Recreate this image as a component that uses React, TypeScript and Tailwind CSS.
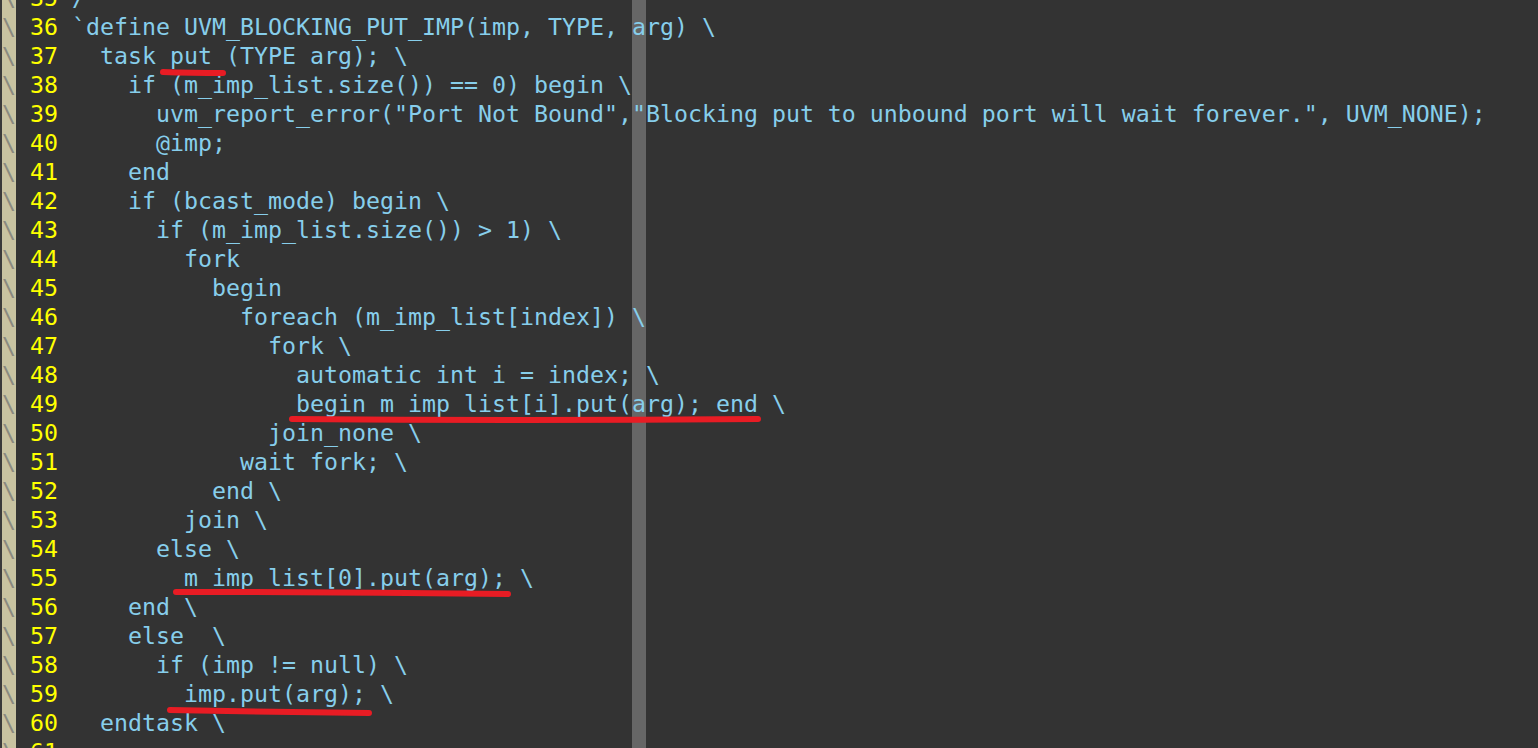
import React from 'react';

const lines: [number, string][] = [
    [35, '/'],
    [36, '`define UVM_BLOCKING_PUT_IMP(imp, TYPE, arg) \\'],
    [37, '  task put (TYPE arg); \\'],
    [38, '    if (m_imp_list.size()) == 0) begin \\'],
    [39, '      uvm_report_error("Port Not Bound","Blocking put to unbound port will wait forever.", UVM_NONE);'],
    [40, '      @imp;'],
    [41, '    end'],
    [42, '    if (bcast_mode) begin \\'],
    [43, '      if (m_imp_list.size()) > 1) \\'],
    [44, '        fork'],
    [45, '          begin'],
    [46, '            foreach (m_imp_list[index]) \\'],
    [47, '              fork \\'],
    [48, '                automatic int i = index; \\'],
    [49, '                begin m_imp_list[i].put(arg); end \\'],
    [50, '              join_none \\'],
    [51, '            wait fork; \\'],
    [52, '          end \\'],
    [53, '        join \\'],
    [54, '      else \\'],
    [55, '        m_imp_list[0].put(arg); \\'],
    [56, '    end \\'],
    [57, '    else  \\'],
    [58, '      if (imp != null) \\'],
    [59, '        imp.put(arg); \\'],
    [60, '  endtask \\'],
    [61, ''],
];

// hand-drawn red marks over the code
const Annotations = () => (
    <svg
        className="absolute inset-0 pointer-events-none z-20"
        width="1538"
        height="748"
        viewBox="0 0 1538 748"
    >
        <g stroke="#e81c24" strokeWidth="6" strokeLinecap="round" fill="none">
            <path d="M163 72 Q190 73 223 73" />
            <path d="M292 419 Q520 421 758 419" />
            <path d="M176 592 Q340 592 508 594" />
            <path d="M170 710 Q270 712 369 713" />
        </g>
    </svg>
);

export default function App() {
    return (
        <div
            className="relative w-[1538px] h-[748px] overflow-hidden bg-[#333333]"
            style={{ fontFamily: '"DejaVu Sans Mono", monospace' }}
        >
            {/* colorcolumn */}
            <div className="absolute top-0 bottom-0 left-[632px] w-[14px] bg-[#666666]" />

            <div className="relative z-10 -mt-[17.5px] text-[23.25px] leading-[29px]">
                {lines.map(([n, code]) => (
                    <div key={n} className="flex h-[29px]">
                        <div className="w-[2px] bg-[#3a3a3a]" />
                        <div className="w-[14px] bg-[#c8c3a1] text-[#8a8a80] whitespace-pre">\</div>
                        <div className="w-[56px] text-[#ffff00] whitespace-pre">
                            {String(n).padStart(3, ' ') + ' '}
                        </div>
                        <div className="text-[#87ceeb] whitespace-pre">{code}</div>
                    </div>
                ))}
            </div>

            <Annotations />
        </div>
    );
}
